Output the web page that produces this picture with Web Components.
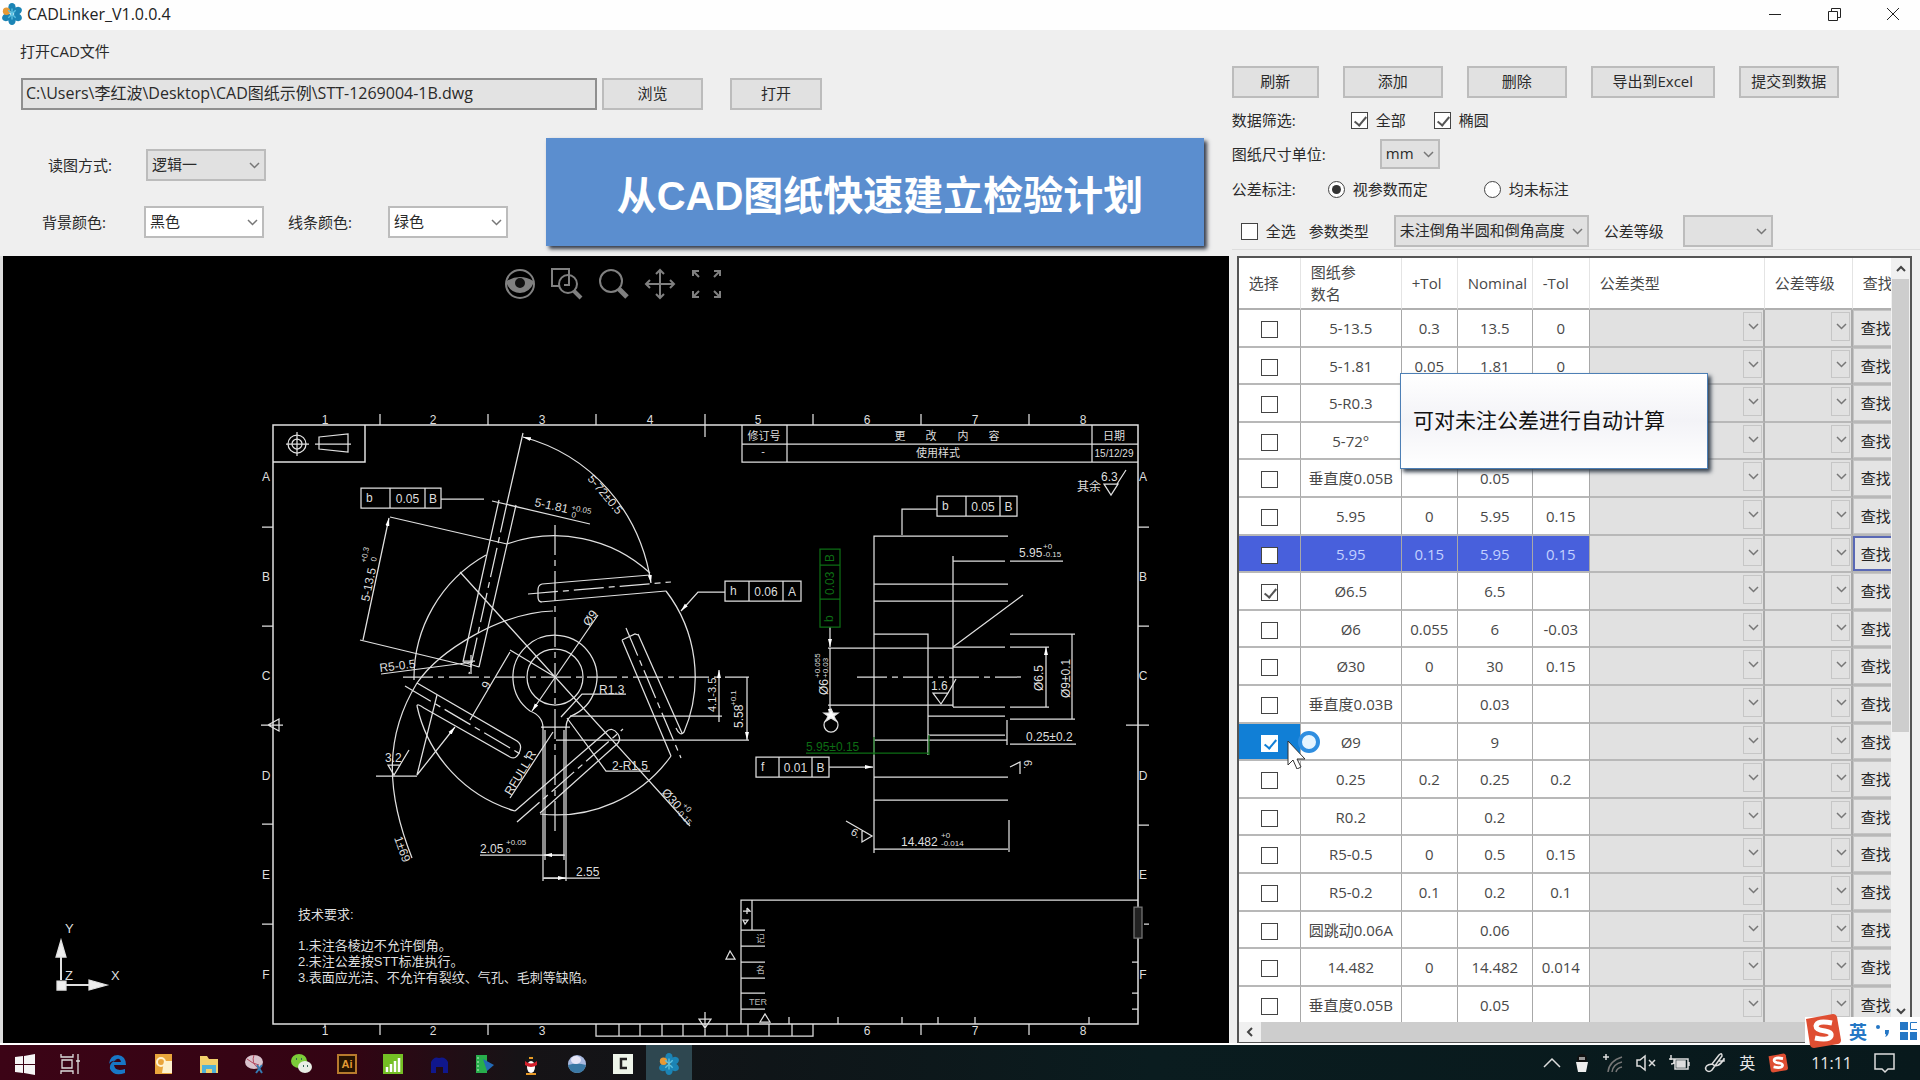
<!DOCTYPE html>
<html lang="zh-CN">
<head>
<meta charset="utf-8">
<title>CADLinker_V1.0.0.4</title>
<style>
html,body{margin:0;height:100%;overflow:hidden}
body{font:15px/20px "Open Sans","Noto Sans CJK SC",sans-serif;color:#2a2a2a;background:#efefef}
</style>
</head>
<body>
<cad-app></cad-app>
<script>
const define = (name, css, html, setup) => {
  const tpl = document.createElement('template');
  tpl.innerHTML = `<style>*{box-sizing:border-box}${css}</style>${html}`;
  customElements.define(name, class extends HTMLElement {
    constructor() {
      super();
      this.attachShadow({mode: 'open'}).append(tpl.content.cloneNode(true));
    }
    connectedCallback() { if (setup) setup(this, this.shadowRoot); }
  });
};

/* ---------- small controls ---------- */
define('cad-button', `
  :host{display:block;height:32px}
  button{width:100%;height:100%;padding:0 0 2px;font:inherit;color:inherit;background:#e1e1e1;border:2px solid #bcbcbc;white-space:nowrap}
`, `<button type="button"><slot></slot></button>`);

define('cad-select', `
  :host{display:flex;align-items:center}
  label{white-space:nowrap}
  .box{position:relative;flex:none;width:var(--w,120px);height:var(--h,32px)}
  select{appearance:none;width:100%;height:100%;margin:0;padding:0 18px 2px 4px;border:2px solid #bcbcbc;border-radius:0;background:var(--bg,#e1e1e1);font:inherit;color:inherit}
  svg{position:absolute;right:6px;top:50%;margin-top:-3px;fill:none;stroke:#777;stroke-width:1.5;pointer-events:none}
`, `<label for="s"><slot></slot></label>
<span class="box"><select id="s"></select><svg width="11" height="7" viewBox="0 0 11 7"><path d="M1 1l4.500 4.500L10 1"/></svg></span>`,
(host, root) => {
  const s = root.querySelector('select');
  s.innerHTML = `<option>${host.getAttribute('value') || ''}</option>`;
  if (!host.textContent.trim()) s.setAttribute('aria-label', host.getAttribute('name') || '');
});

const tickCss = `
  input{appearance:none;position:relative;flex:none;width:17px;height:17px;margin:0;background:#fff;border:1px solid #444}
  input[type=radio]{border-radius:50%}
  input[type=radio]:checked::after{content:"";position:absolute;inset:3px;border-radius:50%;background:#333}
  input[type=checkbox]:checked::after{content:"";position:absolute;left:5px;top:1px;width:5px;height:10px;border:solid #555;border-width:0 2px 2px 0;transform:rotate(40deg)}
`;
define('cad-tick', `
  :host{display:block}
  label{display:flex;align-items:center;gap:8px;white-space:nowrap}
  ${tickCss}
`, `<label><input><span><slot></slot></span></label>`, (host, root) => {
  const i = root.querySelector('input');
  i.type = host.getAttribute('type') || 'checkbox';
  i.checked = host.hasAttribute('checked');
});

/* ---------- window title ---------- */
const flower = s => `<svg width="${s}" height="${s}" viewBox="0 0 24 24"><g fill="#1b84b5"><ellipse cx="12" cy="5" rx="4" ry="5"/><ellipse cx="12" cy="19" rx="4" ry="5"/><ellipse cx="18" cy="8.500" rx="5" ry="4" transform="rotate(-30 18 8.500)"/><ellipse cx="6" cy="15.500" rx="5" ry="4" transform="rotate(-30 6 15.500)"/><ellipse cx="18" cy="15.500" rx="5" ry="4" transform="rotate(30 18 15.500)"/></g><circle cx="6" cy="9" r="4" fill="#e79a35"/><path d="M8 8l8 8M16 8l-8 8M12 6v12" stroke="#5cc1e0" stroke-width="1.500"/></svg>`;
define('title-bar', `
  :host{display:flex;align-items:center;height:30px;padding:0 19px 2px 1px;background:#fefefe;color:#222;font-size:16px}
  h1{margin:0 auto 0 4px;font:inherit}
  nav{display:flex;gap:44px}
  button{display:block;padding:0;border:0;background:none;width:15px;height:15px}
  button svg{display:block;fill:none;stroke:#222}
`, `${flower(22)}<h1>CADLinker_V1.0.0.4</h1>
<nav>
<button aria-label="最小化"><svg width="15" height="15"><path d="M1 7.500h12"/></svg></button>
<button aria-label="还原"><svg width="15" height="15"><path d="M1.500 4.500h9v9h-9zM4.500 4.500v-3h9v9h-3"/></svg></button>
<button aria-label="关闭"><svg width="15" height="15"><path d="M1 1l12 12M13 1L1 13"/></svg></button>
</nav>`);

/* ---------- file and display options ---------- */
define('file-panel', `
  :host{display:block;height:226px;padding:11px 20px 0}
  .row{display:flex;align-items:center}
  .path{margin-top:17px;padding-left:1px}
  input{width:576px;height:32px;padding:0 3px 4px;background:#e3e3e3;border:2px solid #8f8f8f;font:inherit;font-size:16px;color:inherit}
  .browse{width:101px;margin-left:5px}
  .open{width:92px;margin-left:27px}
  .mode{margin-top:39px;padding-left:28px}
  .colors{margin-top:25px;padding-left:22px;gap:24px}
  .mode cad-select{gap:34px}
  .colors cad-select{gap:38px;--bg:#fff}
  .colors cad-select + cad-select{gap:36px}
`, `<label for="path">打开CAD文件</label>
<div class="row path"><input id="path" value="C:\\Users\\李红波\\Desktop\\CAD图纸示例\\STT-1269004-1B.dwg"><cad-button class="browse">浏览</cad-button><cad-button class="open">打开</cad-button></div>
<div class="row mode"><cad-select value="逻辑一">读图方式:</cad-select></div>
<div class="row colors"><cad-select value="黑色">背景颜色:</cad-select><cad-select value="绿色">线条颜色:</cad-select></div>`);

define('title-banner', `
  :host{display:flex;align-items:center;justify-content:center;background:#5b8ecf;color:#fff;box-shadow:3px 3px 4px #333a48;
    font:bold 40px/48px "Liberation Sans","Noto Sans CJK SC",sans-serif;white-space:nowrap}
`, `<slot></slot>`);

/* ---------- drawing ---------- */
const T = (x, y, s, r = 0, size = 12, extra = '') =>
  `<text x="${x}" y="${y}" font-size="${size}"${r ? ` transform="rotate(${r} ${x} ${y})"` : ''} ${extra}>${s}</text>`;
const mid = 'text-anchor="middle"';
const frame = (x, y, a, b, w, t) => `<path d="M${x} ${y}h${w}v20h-${w}zM${a} ${y}v20M${b} ${y}v20"/>` +
  T(x + 5, y + 14, t[0]) + T((a + b) / 2, y + 15, t[1], 0, 12, mid) + T((b + x + w) / 2, y + 15, t[2], 0, 12, mid);
let sheet = '';
['1','2','3','4','5','6','7','8'].forEach((n, i) => {
  const x = 325 + Math.round(i * 108.3);
  sheet += T(x, 424, n, 0, 12, mid);
  if (i !== 3 && i !== 4) sheet += T(x, 1035, n, 0, 12, mid);
});
['A','B','C','D','E','F'].forEach((n, i) => {
  const y = 481 + Math.round(i * 99.5);
  sheet += T(266, y, n, 0, 12, mid) + T(1143, y, n, 0, 12, mid);
});

define('cad-canvas', `
  :host{display:block;position:relative;background:#000;border-left:3px solid #ddd;overflow:hidden}
  svg{display:block;width:100%;height:100%;fill:none;stroke:#e0e0e0;stroke-width:1.25}
  text{fill:#dedede;stroke:none;font-family:"Liberation Sans","Noto Sans CJK SC",sans-serif}
  .c{stroke-dasharray:30 5 6 5}
  .g *,.g{stroke:#0d6d14}
  .g text{fill:#0d6d14;stroke:none}
  .tools{stroke:#808080;stroke-width:2}
  .small text{fill:#b5b5b5}
`, `<svg viewBox="3 256 1226 787" preserveAspectRatio="xMinYMin slice" role="img" aria-label="STT-1269004-1B">
<defs><marker id="a" viewBox="0 0 8 6" refX="8" refY="3" markerWidth="8" markerHeight="6" markerUnits="userSpaceOnUse" orient="auto-start-reverse"><path d="M0 1L8 3L0 5z" fill="#fff" stroke="none"/></marker></defs>
<g class="tools">
<circle cx="520" cy="284" r="14"/><path d="M507 282q13-8 26 0q-4 10-13 10q-9 0-13-10" fill="#808080"/><circle cx="520" cy="283" r="4" fill="#111" stroke="#111"/>
<path d="M559 286h-7v-17h17v6M569 276v9h-5"/><circle cx="568" cy="284" r="9"/><path d="M574 291l7 7" stroke-width="4"/>
<circle cx="611" cy="281" r="11"/><path d="M619 289l8 8" stroke-width="5"/>
<path d="M660 270v28M646 284h28M656 274l4-4l4 4M656 294l4 4l4-4M650 280l-4 4l4 4M670 280l4 4l-4 4"/>
<path d="M693 276v-5h6M693 271l6 6M714 271h6v5M720 271l-6 6M693 291v6h6M693 297l6-6M714 297h6v-6M720 297l-6-6"/>
</g>
<g class="sheet">
<path d="M273 425H1138V1024H273zM273 462H365V425" stroke-width="1.500"/>
<path d="M380 414v11M488 414v11M596 414v11M705 414v23M813 414v11M921 414v11M1029 414v11M325 1024v3M380 1024v11M488 1024v11M921 1024v11M1029 1024v11M596 1024v12H813V1024M619 1024v12M640 1024v12M662 1024v12M683 1024v12M727 1024v12M748 1024v12M769 1024v12M792 1024v12M705 1012v24M699 1019h12l-6 9z"/>
<path d="M262 527h11M262 626h11M262 824h11M262 924h11M1138 527h11M1138 626h11M1126 725h23M1138 825h11M1144 924h5M261 725h22M279 719v12l-11-6z"/>
${sheet}
<circle cx="297" cy="444" r="9"/><circle cx="297" cy="444" r="5"/><path d="M286 444h23M297 432v24M319 437l29-3v18l-29-3zM315 444h36"/>
<path d="M742 425V462H1138M742 444H1138M787 425V462M1092 425V462"/>
${T(764,440,'修订号',0,11,mid)}${T(900,440,'更',0,11,mid)}${T(931,440,'改',0,11,mid)}${T(963,440,'内',0,11,mid)}${T(994,440,'容',0,11,mid)}${T(1114,440,'日期',0,11,mid)}
${T(763,455,'-',0,11,mid)}${T(938,457,'使用样式',0,11,mid)}${T(1114,457,'15/12/29',0,10,mid)}
${T(1077,491,'其余')}${T(1101,481,'6.3')}<path d="M1104 484h14l-7 11zM1117 484l9-14"/>
</g>
<g class="front">
${frame(361,488,390,425,80,['b','0.05','B'])}<path d="M441 499H484"/>
${frame(725,581,749,783,76,['h','0.06','A'])}<path d="M725 592H698L681 611" marker-end="url(#a)"/>
<circle cx="555" cy="677" r="28"/><path d="M530 711A42 42 0 1 1 571 716M530 711Q543 716 543 728M571 716Q566 720 566 728M541 727H570"/>
<path d="M507 544A141 141 0 0 1 650 573M486 555A141 141 0 0 0 414 680M666 591A141 141 0 0 1 684 732Q680 737 676 728M417 706A141 141 0 0 0 515 811M540 814A141 141 0 0 0 671 756"/>
<path class="c" d="M403 677H749M555 525V833"/>
<path d="M523 433L507 503M499 500L463 662M516 505L479 667M463 662L479 667M542 584L650 575M540 602L666 591M542 584Q538 585 538 590V597Q538 602 542 602"/>
<path class="c" d="M507 503L469 674M528 594L671 582M626 628L681 758M405 686L527 758M517 822L623 729"/>
<path d="M622 640L671 756M638 634L682 733M622 640L635 634L638 635M417 683L517 741Q523 745 519 753Q516 760 510 757L424 708Q417 703 417 706M515 811L606 732Q612 726 618 734Q622 740 616 745L540 813"/>
<path d="M523 437C590 455 640 510 651 583" marker-start="url(#a)" marker-end="url(#a)"/>
<path d="M492 501L590 524M390 517L507 544M360 640L472 667M381 674L473 662M460 572L690 826M510 650L555 677"/>
<path d="M389 518L363 640M510 652L470 720M598 615L532 711" marker-start="url(#a)" marker-end="url(#a)"/>
<path d="M553 611C500 613 440 650 417 683C385 735 385 790 412 858"/>
<path d="M626 694H582L561 717M650 771H606L567 718M510 798L553 732M437 695L417 775L455 727" marker-end="url(#a)"/>
<path d="M376 776H417M388 765h12l-6 10zM400 765l9-15M471 655V674M464 661H475"/>
<path d="M570 716H722M556 740H749"/><path d="M719 670V722M747 677V740" marker-start="url(#a)" marker-end="url(#a)"/>
<path d="M543 727V881M566 727V881M545 730V860M564 730V860M480 855H565M543 878H600"/>
<path d="M544 855H564M544 878H566" marker-start="url(#a)" marker-end="url(#a)"/>
${T(534,506,'5-1.81',12,12)}${T(571,510,'+0.05',12,8)}${T(571,517,'0',12,8)}
${T(587,479,'5-72±0.5',50,12)}${T(369,602,'5-13.5',-78)}${T(366,563,'+0.3',-78,8)}${T(376,562,'0',-78,8)}
${T(380,672,'R5-0.5',-7,12)}${T(488,690,'9',-60)}${T(589,627,'Ø9',-55)}${T(599,694,'R1.3')}
${T(716,712,'4.1-3.5',-90,11)}${T(743,728,'5.58',-90)}${T(736,706,'+0.1',-90,8)}
${T(385,762,'3.2')}${T(511,796,'RFULL R',-59,12)}${T(612,770,'2-R1.5')}${T(661,793,'Ø30',48)}${T(682,806,'+0',48,8)}${T(676,812,'-0.15',48,8)}
${T(480,853,'2.05')}${T(506,845,'+0.05',0,8)}${T(506,853,'0',0,8)}${T(576,876,'2.55')}${T(394,838,'1±69',70,12)}
</g>
<g class="side">
${frame(937,496,966,1000,80,['b','0.05','B'])}<path d="M937 509H902V535M830 627V647" marker-end="url(#a)"/>
${frame(756,757,779,812,73,['f','0.01','B'])}<path d="M829 767H873" marker-end="url(#a)"/>
<path d="M874 853V536H1008M874 584H1008M874 601H1008M874 634H928V755M828 648H953M828 705H953M953 556V707M953 647H1005M953 707H1005M928 716H1005M928 735H1005M874 740H1007M874 777H1008M874 800H1008"/>
<path d="M1010 647H1049M1010 707H1049M1010 634H1075M1010 719H1075M1007 720V745M1009 820V852M1010 561H1063M1010 744H1076M1023 595L953 647"/>
<path d="M1046 647V707M1072 634V719M953 561H1005M874 849H1008M830 648V717" marker-start="url(#a)" marker-end="url(#a)"/>
<path class="c" d="M857 677H1021"/>
<path d="M933 693h15l-7 11zM948 693l8-14M1010 767l10-5v12M846 821L872 836L862 842V831"/><circle cx="831" cy="725" r="7"/>
<path d="M831 709l2 4h5l-4 3l2 5l-5-3l-5 3l2-5l-4-3h5z" fill="#fff"/>
${T(1019,557,'5.95')}${T(1043,549,'+0',0,8)}${T(1043,557,'-0.15',0,8)}${T(931,690,'1.6')}
${T(1043,691,'Ø6.5',-90)}${T(1070,698,'Ø9±0.1',-90)}${T(828,695,'Ø6',-90)}${T(820,678,'+0.055',-90,8)}${T(828,678,'+0.03',-90,8)}
${T(1026,741,'0.25±0.2')}${T(1024,760,'6.',90,11)}${T(850,834,'6.',30,11)}
${T(901,846,'14.482')}${T(941,838,'+0',0,8)}${T(941,846,'-0.014',0,8)}
<g class="g"><path d="M820 549h20v78h-20zM820 565h20M820 599h20M806 753H929M929 735v20M874 737v18"/>${T(833,622,'b',-90)}${T(834,595,'0.03',-90)}${T(834,562,'B',-90)}${T(806,751,'5.95±0.15')}</g>
</g>
<g class="block small">
<path d="M741 1024V900H1138M752 900V930M741 930h24M741 946h24M741 962h24M741 978h24M741 993h24M741 1009h24M726 959h9l-5-8zM760 1022l5-8l5 8zM789 1017v7M838 1017v7M902 1017v7M938 1017v7M975 1017v7M1089 1017v7M1132 962h6M1132 993h6M1132 1009h6"/>
<path d="M1134 907h8v31h-8z" fill="#222" stroke="#777"/>
<path d="M743 911h7l-3-3M747 914v-6M743 920h5l-3 4z"/>
${T(756,942,'记',0,9)}${T(756,973,'名',0,9)}${T(749,1005,'TER',0,9)}
</g>
<g class="notes">
${T(298,919,'技术要求:',0,13)}${T(298,950,'1.未注各棱边不允许倒角。',0,13)}${T(298,966,'2.未注公差按STT标准执行。',0,13)}${T(298,982,'3.表面应光洁、不允许有裂纹、气孔、毛刺等缺陷。',0,13)}
</g>
<g class="ucs"><path d="M61 957V980M66 985H90" stroke-width="2"/><path d="M61 940l5 17h-10zM107 985l-18-5v10zM57 981h9v9h-9z" fill="#eee"/>${T(65,933,'Y',0,13)}${T(65,980,'Z',0,13)}${T(111,980,'X',0,13)}</g>
</svg>`);

/* ---------- parameter filters ---------- */
define('param-filters', `
  :host{display:block;height:226px;padding:36px 0 0 3px}
  .row{display:flex;align-items:center}
  .buttons{gap:24px}
  .s{width:87px}.m{width:100px}.l{width:124px}
  .filter{margin-top:12px}
  .filter .cap{width:119px}
  .filter cad-tick{margin-right:28px}
  .unit{margin-top:9px;--w:60px;--h:30px}
  .unit cad-select{gap:54px}
  .mark{margin-top:10px}
  .mark .cap{width:96px}
  .mark cad-tick{margin-right:56px}
  .type{margin-top:16px;padding:0 0 2px 9px;gap:13px;border-bottom:1px solid #ddd}
  .type cad-select{gap:25px;--w:195px}
  .type cad-select + cad-select{gap:19px;margin-left:2px;--w:90px}
`, `<div class="row buttons"><cad-button class="s">刷新</cad-button><cad-button class="m">添加</cad-button><cad-button class="m">删除</cad-button><cad-button class="l">导出到Excel</cad-button><cad-button class="m">提交到数据</cad-button></div>
<div class="row filter"><span class="cap">数据筛选:</span><cad-tick checked>全部</cad-tick><cad-tick checked>椭圆</cad-tick></div>
<div class="row unit"><cad-select value="mm">图纸尺寸单位:</cad-select></div>
<div class="row mark"><span class="cap">公差标注:</span><cad-tick type="radio" checked>视参数而定</cad-tick><cad-tick type="radio">均未标注</cad-tick></div>
<div class="row type"><cad-tick>全选</cad-tick><cad-select value="未注倒角半圆和倒角高度">参数类型</cad-select><cad-select>公差等级</cad-select></div>`);

/* ---------- parameter table ---------- */
const rows = [
  ['5-13.5','0.3','13.5','0'],['5-1.81','0.05','1.81','0'],['5-R0.3','','',''],['5-72°','','',''],
  ['垂直度0.05B','','0.05',''],['5.95','0','5.95','0.15'],['5.95','0.15','5.95','0.15','sel'],['Ø6.5','','6.5','','on'],
  ['Ø6','0.055','6','-0.03'],['Ø30','0','30','0.15'],['垂直度0.03B','','0.03',''],['Ø9','','9','','on cur'],
  ['0.25','0.2','0.25','0.2'],['R0.2','','0.2',''],['R5-0.5','0','0.5','0.15'],['R5-0.2','0.1','0.2','0.1'],
  ['圆跳动0.06A','','0.06',''],['14.482','0','14.482','0.014'],['垂直度0.05B','','0.05','']];
const cell = name => `<td class="pick"><cad-cell name="${name}"></cad-cell></td>`;

define('cad-cell', `
  :host{display:block;position:relative;height:100%}
  select{appearance:none;display:block;width:100%;height:100%;border:0;border-radius:0;background:#e1e1e1;font:inherit}
  i{position:absolute;right:1px;top:2px;bottom:5px;width:19px;border:1px solid #c6c6c6;pointer-events:none}
  svg{position:absolute;left:4px;top:10px;fill:none;stroke:#777;stroke-width:1.5}
`, `<select></select><i><svg width="11" height="7" viewBox="0 0 11 7"><path d="M1 1l4.500 4.500L10 1"/></svg></i>`,
(host, root) => root.querySelector('select').setAttribute('aria-label', host.getAttribute('name')));

define('param-table', `
  :host{display:grid;grid-template:minmax(0,1fr) 20px / minmax(0,1fr) 19px;border:2px solid #555;border-width:2px 2px 1px 2px;background:#fff;color:#484848}
  .view{overflow:hidden}
  table{table-layout:fixed;width:685px;border-collapse:separate;border-spacing:0}
  th{height:52px;padding:0 0 0 10px;text-align:left;font-weight:400;line-height:22px;white-space:nowrap;border-right:1px solid #e4e4e4;border-bottom:2px solid #b0b0b0}
  td{height:38px;padding:0;text-align:center;white-space:nowrap;border-right:1px solid #a8a8a8;border-bottom:2px solid #b8b8b8}
  tr:nth-child(5n+2) td,tr:nth-child(5n+4) td{height:37px}
  td.pick{border-right:2px solid #aaa;background:#e1e1e1}
  td.find{background:#e1e1e1}
  td button{display:block;width:100%;height:100%;padding:0 0 0 7px;border:1px solid #c4c4c4;background:#e4e4e4;font:inherit;color:#222;text-align:left}
  td input{vertical-align:middle}
  ${tickCss}
  tr.sel td:nth-child(-n+5){background:#4860dc;color:#c3d0ff}
  tr.sel button{border:2px solid #5968b5;padding-left:6px}
  tr.cur td:first-child{background:#117fd6}
  tr.cur input{border-color:#fff}
  tr.cur input:checked::after{border-color:#117fd6}
  .v{display:flex;flex-direction:column;align-items:center;background:#f0f0f0}
  .v i{width:17px;flex:455 0 0;background:#cdcdcd}
  .v span{flex:270 0 0}
  .h{grid-column:1/3;display:flex;align-items:center;background:#f0f0f0}
  .h i{flex:1;height:100%;background:#cdcdcd}
  .h svg{margin:0 7px}
  .v svg{margin:7px 0}
  svg{fill:none;stroke:#444;stroke-width:2;flex:none}
`, `<div class="view"><table><colgroup><col width="62"><col width="101"><col width="56"><col width="75"><col width="57"><col width="175"><col width="88"><col width="71"></colgroup>
<thead><tr><th>选择</th><th>图纸参<br>数名</th><th>+Tol</th><th>Nominal</th><th>-Tol</th><th>公差类型</th><th>公差等级</th><th>查找</th></tr></thead>
<tbody>${rows.map(r => `<tr class="${r[4] || ''}"><td><input type="checkbox" aria-label="选择"${/on/.test(r[4] || '') ? ' checked' : ''}></td>${r.slice(0, 4).map(v => `<td>${v}</td>`).join('')}${cell('公差类型')}${cell('公差等级')}<td class="find"><button>查找</button></td></tr>`).join('')}</tbody></table></div>
<div class="v"><svg width="10" height="7"><path d="M1 6l4-4l4 4"/></svg><i></i><span></span><svg width="10" height="7"><path d="M1 1l4 4l4-4"/></svg></div>
<div class="h"><svg width="8" height="10"><path d="M6 1l-4 4l4 4"/></svg><i></i></div>`);

define('tip-note', `
  :host{display:flex;align-items:center;padding:0 0 2px 12px;border:1px solid #4d7fb5;background:linear-gradient(#fff,#f3f3f7 50%,#fff);box-shadow:3px 3px 4px #39434f;color:#111;font-size:21px;line-height:28px;white-space:nowrap}
`, `<slot></slot>`);

define('busy-cursor', `:host{display:block}svg{display:block}`,
`<svg width="36" height="38" viewBox="0 0 36 38"><circle cx="22" cy="11" r="9" fill="#e6f5ff" stroke="#2f8ee0" stroke-width="4"/><path d="M1 10v24l5-5l4 9l4-2l-4-8h8z" fill="#fff" stroke="#333"/></svg>`);

/* ---------- input method bar ---------- */
const sogou = s => `<svg width="${s}" height="${s}" viewBox="0 0 36 36"><path d="M1 6L28 1Q31 1 32 4L36 27Q36 30 33 31L9 35Q6 35 5 32z" fill="#df4e32"/><path d="M27 10Q12 7 11 13Q11 17 20 18Q27 19 26 23Q24 28 10 25" fill="none" stroke="#fff" stroke-width="5"/></svg>`;
define('ime-bar', `
  :host{display:flex;align-items:center;gap:8px;height:28px;background:#fff;color:#2577c5;font:bold 18px/24px "Noto Sans CJK SC",sans-serif}
  svg{flex:none}
`, `${sogou(36)}<span>英</span><svg width="16" height="16" fill="#2577c5"><circle cx="3" cy="4" r="2"/><path d="M10 7h4q0 6-4 7q2-3 0-3z"/></svg><svg width="18" height="18" fill="#2577c5"><path d="M1 0h8v8h-8zM1 10h8v8h-8zM11 10h8v8h-8z"/><path d="M11.500 .500h8v7h-8z" fill="none" stroke="#2577c5"/></svg>`);

/* ---------- taskbar ---------- */
const ic = (label, body) => `<button aria-label="${label}"><svg width="22" height="22" viewBox="0 0 22 22">${body}</svg></button>`;
define('task-bar', `
  :host{display:flex;align-items:center;height:35px;padding:0 24px 0 0;background:linear-gradient(90deg,#3c0416 0,#330413 18%,#161316 27%,#0f1518 40%,#0a1c1f 60%,#08191c);color:#e8e8e8}
  button{display:flex;align-items:center;justify-content:center;width:46px;height:35px;padding:2px 0 0;border:0;background:none}
  button:last-child{background:#2e4750}
  .apps{display:flex;margin-right:auto;padding-left:2px}
  .tray{display:flex;align-items:center;gap:13px;padding-top:1px}
  .tray svg{fill:none;stroke:#ddd;stroke-width:1.5}
  .tray .lang{font-size:16px}
  .tray .solid svg{stroke:none}
  time{font-size:16px;margin:0 9px 0 10px}
  .tray span,.solid{display:flex}
`, `<div class="apps">
${ic('开始','<path d="M1 4l8-1v8H1zM10 3l11-2v10H10zM1 12h8v8l-8-1zM10 12h11v10l-11-2z" fill="#f5f5f5"/>')}
${ic('任务视图','<path d="M1 1v3h12v-3M1 21v-3h12v3M2 7h10v8H2zM18 1v20M16 8h4" fill="none" stroke="#ddd" stroke-width="1.300"/>')}
${ic('Edge','<path d="M3 11Q4 2 12 2Q20 3 20 12H8Q9 19 19 16V20Q8 24 4 16Q3 9 11 7Q4 8 3 11M8 9H15Q14 5 11 6Q8 7 8 9" fill="#1877c6"/>')}
${ic('Outlook','<path d="M3 1h17v20H3z" fill="#e9a53c"/><path d="M12 8h8v12h-10z" fill="#fdf1cd"/><circle cx="9" cy="9" r="4" fill="none" stroke="#fff2d0" stroke-width="2"/>')}
${ic('文件资源管理器','<path d="M2 3h7l2 3h9v14H2z" fill="#f2cf6b"/><path d="M4 12h14v8h-4v-4H8v4H4z" fill="#4eb1d8"/>')}
${ic('截图','<ellipse cx="10" cy="9" rx="9" ry="7" fill="#d9c3cd"/><path d="M10 2q-3 8 4 13M3 6q6 5 12 6" stroke="#b2475d" fill="none"/><path d="M13 12l5 8M18 12l-6 8" stroke="#357bb1" stroke-width="2"/>')}
${ic('微信','<ellipse cx="9" cy="8" rx="8" ry="7" fill="#7ccc39"/><ellipse cx="15" cy="14" rx="7" ry="6" fill="#e8eee5"/><path d="M6 6h1M11 6h1M13 13h1M17 13h1" stroke="#365" stroke-width="2"/>')}
<button aria-label="Illustrator"><svg width="22" height="22"><path d="M2 2h18v18H2z" fill="#261300" stroke="#b77a2d" stroke-width="2"/><text x="11" y="15" text-anchor="middle" font-size="11" font-weight="bold" fill="#e39a35">Ai</text></svg></button>
${ic('图表','<path d="M1 1h20v20H1z" fill="#74bf24"/><path d="M5 19v-5M9 19v-8M13 19v-11M17 19V5" stroke="#fff" stroke-width="2.500"/>')}
${ic('百度','<path d="M3 9q3-6 8-4q6-2 9 4v11h-5v-6h-7v6H3z" fill="#10178d"/>')}
${ic('播放','<path d="M2 2h11v18H2z" fill="#28ad4c"/><path d="M9 6l11 6l-7 6z" fill="#2269b5"/><path d="M4 4v14" stroke="#bff0c0" stroke-dasharray="2 2"/>')}
${ic('QQ','<ellipse cx="11" cy="10" rx="7" ry="9" fill="#161616"/><ellipse cx="11" cy="14" rx="4" ry="6" fill="#fff"/><path d="M5 8q6 5 12 0v4q-6 4-12 0z" fill="#d31f2b"/><path d="M6 21h10M9 5h4" stroke="#e99a27" stroke-width="2"/>')}
${ic('浏览器','<circle cx="11" cy="11" r="9" fill="#a8b9df"/><path d="M2 12q9-3 18 0q-2 8-9 8q-8-1-9-8" fill="#3a78a4"/><ellipse cx="10" cy="7" rx="5" ry="4" fill="#e8e7f7"/>')}
${ic('Camtasia','<path d="M1 1h20v20H1z" fill="#eef5ea"/><path d="M15 6H9v9h6" fill="none" stroke="#222" stroke-width="2.500"/>')}
<button aria-label="CADLinker">${flower(22)}</button>
</div>
<div class="tray">
<svg width="18" height="18"><path d="M1 13l8-8l8 8"/></svg>
<span class="solid"><svg width="16" height="20"><circle cx="8" cy="6" r="5" fill="#111"/><path d="M2 9h12l-2 10H4z" fill="#eee"/><path d="M5 4h6v3H5z" fill="#999"/></svg></span>
<svg width="20" height="20"><path d="M5 19Q6 8 19 4M9 19Q10 11 19 9M13 19Q14 15 19 14" stroke="#777"/><path d="M3 1v6M0 4h6"/></svg>
<svg width="20" height="18"><path d="M1 6h3l5-4v14l-5-4H1zM13 6l6 6M19 6l-6 6"/></svg>
<svg width="22" height="18"><path d="M6 5h13v10H6zM20 8v4M2 1v5M0 5h5v3q0 2-3 2"/><path d="M8 7h8v6H8z" fill="#ddd"/></svg>
<svg width="22" height="22"><path d="M2 18Q0 13 8 12L15 3Q18 0 18 4L8 18Q5 21 2 18M8 12Q14 17 20 7M15 9h5v-3"/></svg>
<span class="lang">英</span>
<span class="solid">${sogou(20)}</span>
<time>11:11</time>
<svg width="22" height="22"><path d="M1 2h19v15h-6l-3 3l-3-3H1z"/></svg>
</div>`);

/* ---------- page ---------- */
define('cad-app', `
  :host{display:flex;flex-direction:column;height:100vh;position:relative;overflow:hidden}
  main{flex:1;min-height:0;display:grid;grid-template-columns:minmax(0,64fr) minmax(0,36fr);border-bottom:2px solid #fff}
  section{display:flex;flex-direction:column;min-width:0;min-height:0}
  cad-canvas,param-table{flex:1;min-height:0}
  param-table{margin:0 8px}
  title-banner{position:absolute;left:546px;top:138px;width:658px;height:108px;padding:8px 0 0 10px;box-sizing:border-box}
  tip-note{position:absolute;left:1400px;top:373px;width:308px;height:96px;box-sizing:border-box}
  busy-cursor{position:absolute;left:1287px;top:731px}
  ime-bar{position:absolute;right:0;bottom:35px;width:115px}
`, `<title-bar></title-bar>
<main><section><file-panel></file-panel><cad-canvas></cad-canvas></section>
<section><param-filters></param-filters><param-table></param-table></section></main>
<task-bar></task-bar>
<title-banner>从CAD图纸快速建立检验计划</title-banner>
<tip-note>可对未注公差进行自动计算</tip-note>
<busy-cursor></busy-cursor>
<ime-bar></ime-bar>`);
</script>
</body>
</html>
